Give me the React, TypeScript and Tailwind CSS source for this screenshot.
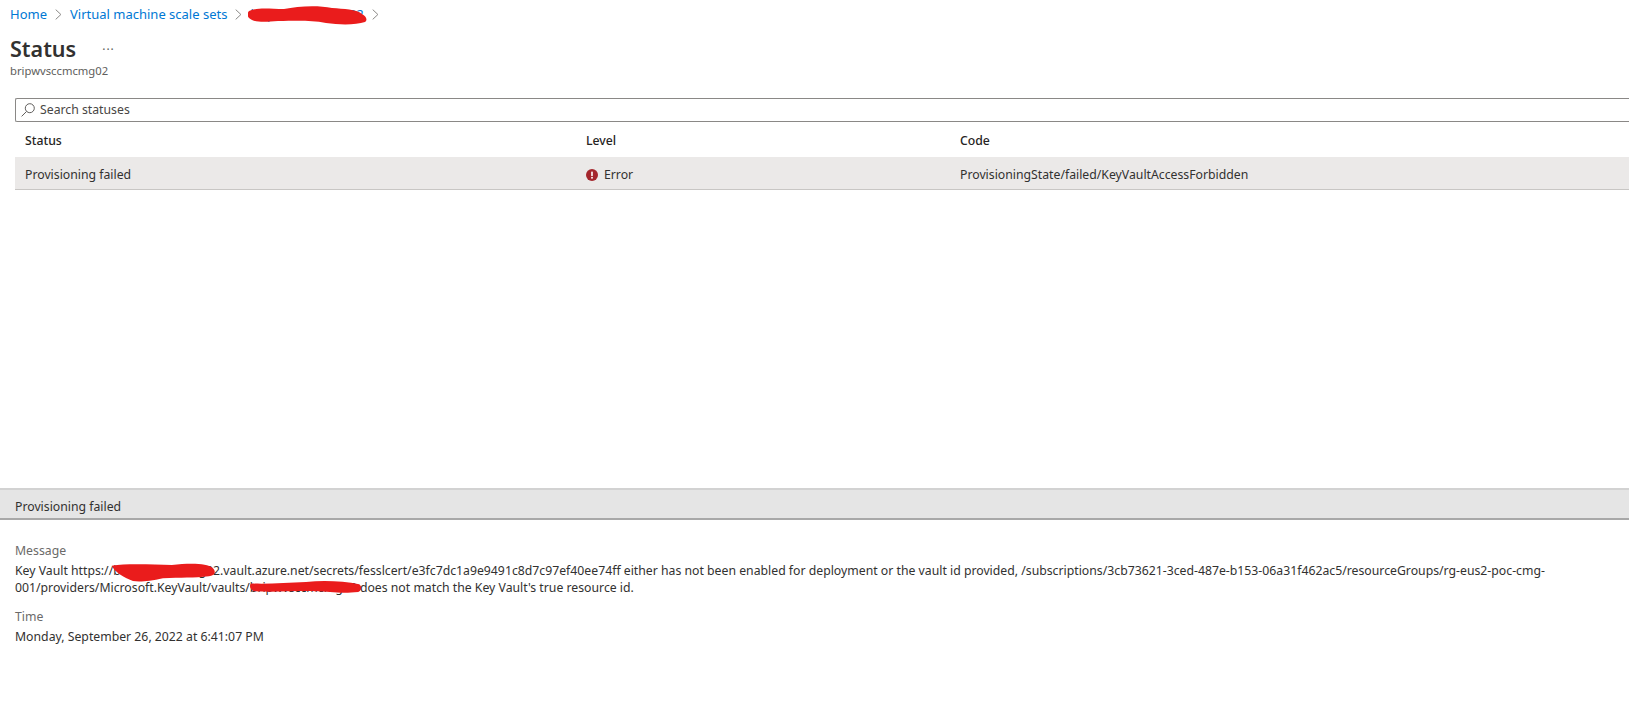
function Scribble({ d, className }: { d: string; className: string }) {
  return (
    <svg viewBox="0 0 120 20" preserveAspectRatio="none" className={className}>
      <path d={d} fill="#ea1c1c" />
    </svg>
  );
}

function Chevron({ className }: { className: string }) {
  return (
    <svg viewBox="0 0 7 11" fill="none" className={`w-[7px] h-[11px] ${className}`}>
      <path d="M0.7 0.6 L5.9 5.5 L0.7 10.4" stroke="#8a8886" strokeWidth="1" />
    </svg>
  );
}

function Crumb({ label }: { label: string }) {
  return (
    <>
      <a className="text-[#0078d4]">{label}</a>
      <Chevron className="mx-[8px]" />
    </>
  );
}

export default function App() {
  return (
    <div className="h-screen w-full overflow-hidden bg-white text-[#323130] text-[12.25px] font-['Noto_Sans',sans-serif]">
      <div className="h-[488px] pt-[5px]">
        <div className="flex items-center h-[19px] pl-[10px] text-[13px]">
          <Crumb label="Home" />
          <Crumb label="Virtual machine scale sets" />
          <span className="relative text-[#0078d4]">
            bripwvsccmcmg02
            <Scribble
              className="absolute left-[-2px] top-[0px] w-[120px] h-[20px]"
              d="M1 6 C10 2 22 4 36 4 C50 1 70 0 84 3 C96 4 108 4 114 9 C118 11 120 15 117 17 C108 20 92 20 78 18 C62 15 48 16 30 16 C18 17 6 18 1 13 C-1 11 -1 8 1 6 Z"
            />
          </span>
          <Chevron className="ml-[8px]" />
        </div>
        <div className="flex items-center mt-[11px] pl-[10px] h-[28px]">
          <h1 className="text-[21.5px] font-semibold leading-[28px]">Status</h1>
          <span className="ml-[26px] mb-[6px] text-[#605e5c] text-[12px] tracking-[1px] leading-none">...</span>
        </div>
        <div className="pl-[10px] text-[11.25px] leading-[16px] text-[#605e5c]">bripwvsccmcmg02</div>

        <div className="pl-[15px] mt-[19px]">
          <div className="flex items-center h-[24px] border border-[#8a8886] border-r-0 rounded-l-[2px] pl-[5px]">
            <svg viewBox="0 0 14 14" fill="none" className="w-[14px] h-[14px]" stroke="#605e5c" strokeWidth="1">
              <circle cx="8.8" cy="5.2" r="4.5" />
              <path d="M5.6 8.4 L0.6 13.4" />
            </svg>
            <span className="ml-[5px] text-[#484644]">Search statuses</span>
          </div>
          <div className="flex items-center h-[35px] pl-[10px] pt-[4px] font-medium text-[#252423]">
            <div className="w-[561px]">Status</div>
            <div className="w-[374px]">Level</div>
            <div>Code</div>
          </div>
          <div className="flex items-center h-[33px] pl-[10px] pt-[4px] bg-[#ebe9e8] border-b border-[#c8c6c4]">
            <div className="w-[561px]">Provisioning failed</div>
            <div className="w-[374px] flex items-center">
              <svg viewBox="0 0 12 12" className="w-[12px] h-[12px] mr-[6px]">
                <circle cx="6" cy="6" r="6" fill="#a4262c" />
                <rect x="5.2" y="2.4" width="1.6" height="4.6" rx="0.6" fill="#fff" />
                <circle cx="6" cy="8.7" r="0.95" fill="#fff" />
              </svg>
              Error
            </div>
            <div>ProvisioningState/failed/KeyVaultAccessForbidden</div>
          </div>
        </div>
      </div>

      <div className="flex items-center h-[32px] pl-[15px] pt-[7px] bg-[#e5e5e5] border-t-2 border-b-2 border-t-[#d2d2d2] border-b-[#a8a8a8]">
        Provisioning failed
      </div>

      <div className="pl-[15px] pt-[22px] leading-[17px]">
        <div className="text-[#6b6a69]">Message</div>
        <div className="mt-[3px] whitespace-nowrap">
          Key Vault https://
          <span className="relative">
            bripwvsccmcm
            <Scribble
              className="absolute left-[-3px] top-[1px] w-[106px] h-[19px]"
              d="M2 3 C20 0 50 2 70 2 C90 0 110 0 116 5 C120 8 120 13 112 14 C95 16 80 15 60 16 C45 19 35 20 26 19 C15 15 6 10 2 3 Z"
            />
          </span>
          g02.vault.azure.net/secrets/fesslcert/e3fc7dc1a9e9491c8d7c97ef40ee74ff either has not been enabled for deployment or the vault id provided, /subscriptions/3cb73621-3ced-487e-b153-06a31f462ac5/resourceGroups/rg-eus2-poc-cmg-
          <br />
          001/providers/Microsoft.KeyVault/vaults/
          <span className="relative">
            bripwvsccmcmg02
            <Scribble
              className="absolute left-0 top-[1px] w-[112px] h-[14px]"
              d="M1 5 C20 6 40 4 60 3 C80 0 100 2 117 6 C120 9 120 15 116 17 C96 20 86 16 70 16 C50 15 26 18 4 16 C0 13 -1 8 1 5 Z"
            />
          </span>{" "}
          does not match the Key Vault's true resource id.
        </div>
        <div className="mt-[12px] text-[#6b6a69]">Time</div>
        <div className="mt-[3px]">Monday, September 26, 2022 at 6:41:07 PM</div>
      </div>
    </div>
  );
}
